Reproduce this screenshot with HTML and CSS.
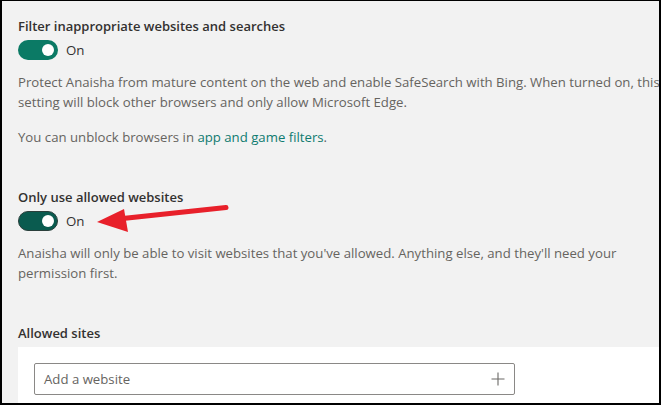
FILE: index.html
```html
<!DOCTYPE html>
<html lang="en">
<head>
<meta charset="utf-8">
<title>Content filters</title>
<link rel="stylesheet" href="styles.css">
</head>
<body>
<div class="frame">
  <div class="content">
    <section class="setting setting-first">
      <h2 class="setting-title">Filter inappropriate websites and searches</h2>
      <div class="toggle-row">
        <span class="toggle"><span class="knob"></span></span>
        <span class="toggle-label">On</span>
      </div>
      <p class="desc desc-nowrap">Protect Anaisha from mature content on the web and enable SafeSearch with Bing. When turned on, this<br>setting will block other browsers and only allow Microsoft Edge.</p>
      <p class="desc desc-link">You can unblock browsers in <a class="link" href="#">app and game filters</a>.</p>
    </section>

    <section class="setting setting-second">
      <h2 class="setting-title">Only use allowed websites</h2>
      <div class="toggle-row">
        <span class="toggle toggle-active"><span class="knob"></span></span>
        <span class="toggle-label">On</span>
      </div>
      <p class="desc desc-nowrap">Anaisha will only be able to visit websites that you've allowed. Anything else, and they'll need your<br>permission first.</p>
    </section>

    <h2 class="setting-title sites-title">Allowed sites</h2>
  </div>
  <div class="panel">
    <div class="input-box">
      <span class="placeholder">Add a website</span>
      <svg class="plus" width="14" height="14" viewBox="0 0 14 14"><path d="M7 0.5v13M0.5 7h13" stroke="#6b6966" stroke-width="1.1" fill="none"/></svg>
    </div>
  </div>

  <svg class="arrow" width="661" height="405" viewBox="0 0 661 405">
    <line x1="226" y1="207.5" x2="118" y2="219" stroke="#e8202a" stroke-width="5" stroke-linecap="round"/>
    <polygon points="97,222 124,209 128,232" fill="#e8202a"/>
  </svg>
</div>
</body>
</html>
```

FILE: styles.css
```css
* { box-sizing: border-box; }
html, body { margin: 0; padding: 0; }
body {
  font-family: "Segoe UI", "Open Sans", "Noto Sans", sans-serif;
  font-size: 13px;
  color: #323130;
}
.frame {
  position: relative;
  width: 661px;
  height: 405px;
  overflow: hidden;
  background: #f2f2f2;
  border-style: solid;
  border-color: #000;
  border-width: 1px 2px 2px 2px;
  display: flex;
  flex-direction: column;
}
.content {
  padding: 15px 0 0 16px;
}
.setting-title {
  margin: 0;
  font-size: 13px;
  font-weight: 600;
  line-height: 20px;
  color: #323130;
}
.toggle-row {
  display: flex;
  align-items: center;
  gap: 8px;
  margin-top: 4px;
  height: 20px;
}
.toggle {
  width: 40px;
  height: 20px;
  border-radius: 10px;
  background: #0b7a65;
  display: flex;
  align-items: center;
  justify-content: flex-end;
  padding-right: 4px;
}
.toggle-active {
  background: #0a5b4f;
  border: 1px solid #2a3f3b;
  padding-right: 3px;
}
.knob {
  width: 12px;
  height: 12px;
  border-radius: 50%;
  background: #fff;
}
.toggle-label {
  font-size: 13.3px;
  color: #323130;
}
.desc {
  margin: 12px 0 0;
  font-size: 13.2px;
  line-height: 20px;
  color: #66645f;
}
.desc-nowrap { white-space: nowrap; }
.desc-link { margin-top: 15px; }
.link { color: #0f7b70; text-decoration: none; }
.setting-second { margin-top: 40px; }
.sites-title { margin-top: 40px; }
.panel {
  flex: 1;
  margin: 4px 0 0 16px;
  background: #fff;
  padding: 16px 0 0 16px;
}
.input-box {
  width: 481px;
  height: 32px;
  border: 1px solid #8a8886;
  border-radius: 2px;
  display: flex;
  align-items: center;
  justify-content: space-between;
  padding: 0 9px 0 9px;
}
.placeholder { color: #66645f; font-size: 13.2px; }
.arrow {
  position: absolute;
  left: -2px;
  top: -1px;
  pointer-events: none;
}
```
